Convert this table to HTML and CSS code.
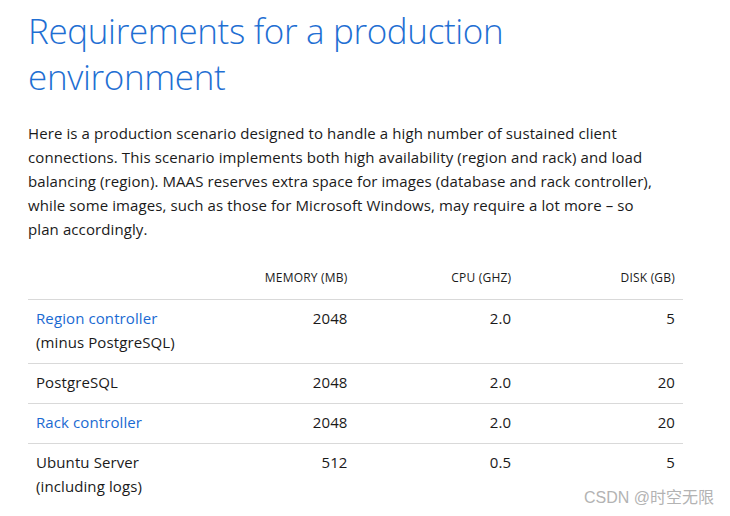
FILE: index.html
```html
<!DOCTYPE html>
<html lang="en">
<head>
<meta charset="utf-8">
<title>Requirements for a production environment</title>
<link rel="stylesheet" href="styles.css">
</head>
<body>
<main class="page">
  <h2 class="title">Requirements for a production environment</h2>
  <p class="intro">Here is a production scenario designed to handle a high number of sustained client connections. This scenario implements both high availability (region and rack) and load balancing (region). MAAS reserves extra space for images (database and rack controller), while some images, such as those for Microsoft Windows, may require a lot more – so plan accordingly.</p>
  <table class="req">
    <thead>
      <tr>
        <th class="name"></th>
        <th class="num">Memory (MB)</th>
        <th class="num">CPU (GHz)</th>
        <th class="num">Disk (GB)</th>
      </tr>
    </thead>
    <tbody>
      <tr>
        <td class="name"><a href="#">Region controller</a><br>(minus PostgreSQL)</td>
        <td class="num">2048</td>
        <td class="num">2.0</td>
        <td class="num">5</td>
      </tr>
      <tr>
        <td class="name">PostgreSQL</td>
        <td class="num">2048</td>
        <td class="num">2.0</td>
        <td class="num">20</td>
      </tr>
      <tr>
        <td class="name"><a href="#">Rack controller</a></td>
        <td class="num">2048</td>
        <td class="num">2.0</td>
        <td class="num">20</td>
      </tr>
      <tr>
        <td class="name">Ubuntu Server<br>(including logs)</td>
        <td class="num">512</td>
        <td class="num">0.5</td>
        <td class="num">5</td>
      </tr>
    </tbody>
  </table>
</main>
<div class="watermark">CSDN @时空无限</div>
</body>
</html>
```
FILE: styles.css
```css
html, body {
  margin: 0;
  padding: 0;
  background: #ffffff;
}
body {
  font-family: "Open Sans", "Liberation Sans", sans-serif;
  color: #1a1a1a;
  width: 730px;
  height: 516px;
  overflow: hidden;
  position: relative;
}
.page {
  padding: 8px 0 0 28px;
}
.title {
  margin: 0;
  font-family: "Open Sans", "Lato", sans-serif;
  font-weight: 300;
  font-size: 35px;
  line-height: 46px;
  color: #1f6fd3;
  width: 520px;
  letter-spacing: -0.35px;
}
.intro {
  margin: 21px 0 0 0;
  width: 640px;
  font-size: 15px;
  line-height: 24px;
  letter-spacing: 0.1px;
}
.req {
  margin-top: 24px;
  width: 655px;
  border-collapse: collapse;
  table-layout: fixed;
  font-size: 15px;
  letter-spacing: 0.1px;
}
.req th {
  font-size: 12px;
  font-weight: 400;
  text-transform: uppercase;
  line-height: 16px;
  padding: 5px 8px 13px 8px;
  border-bottom: 1px solid #d9d9d9;
  letter-spacing: 0.2px;
}
.req td {
  line-height: 24px;
  padding: 6px 8px 9px 8px;
  vertical-align: top;
  border-bottom: 1px solid #d9d9d9;
}
.req tbody tr:last-child td {
  border-bottom: none;
}
.req .name {
  text-align: left;
}
.req .num {
  text-align: right;
}
.req a {
  color: #1a6ad2;
  text-decoration: none;
}
.watermark {
  position: absolute;
  right: 16px;
  bottom: 8px;
  font-family: "Liberation Sans", "Noto Sans CJK SC", sans-serif;
  font-size: 16px;
  color: #b3b3b3;
}
```
